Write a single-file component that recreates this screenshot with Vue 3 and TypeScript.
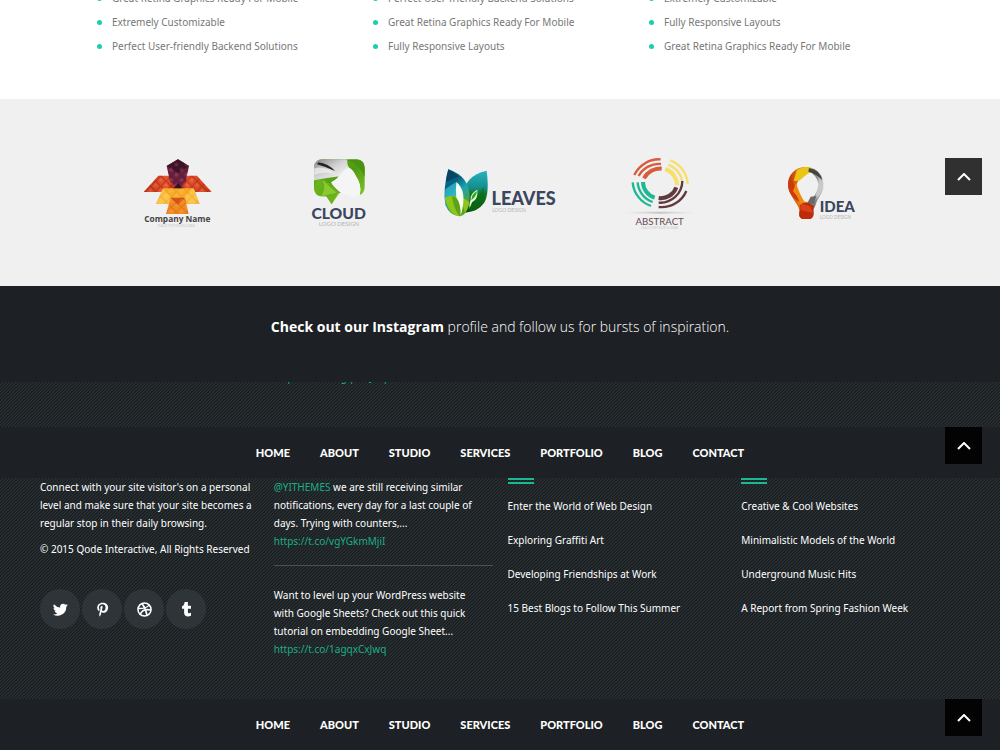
<script setup lang="ts">
interface Feature { id: string; items: string[] }
interface FooterLinks { id: string; links: string[] }

const features: Feature[] = [
  { id: 'a', items: ['Great Retina Graphics Ready For Mobile', 'Extremely Customizable', 'Perfect User-friendly Backend Solutions'] },
  { id: 'b', items: ['Perfect User-friendly Backend Solutions', 'Great Retina Graphics Ready For Mobile', 'Fully Responsive Layouts'] },
  { id: 'c', items: ['Extremely Customizable', 'Fully Responsive Layouts', 'Great Retina Graphics Ready For Mobile'] },
]

const menu: string[] = ['HOME', 'ABOUT', 'STUDIO', 'SERVICES', 'PORTFOLIO', 'BLOG', 'CONTACT']

const posts: FooterLinks[] = [
  { id: 'recent', links: ['Enter the World of Web Design', 'Exploring Graffiti Art', 'Developing Friendships at Work', '15 Best Blogs to Follow This Summer'] },
  { id: 'popular', links: ['Creative & Cool Websites', 'Minimalistic Models of the World', 'Underground Music Hits', 'A Report from Spring Fashion Week'] },
]
</script>

<template>
  <div class="page">
    <section class="features">
      <ul v-for="col in features" :key="col.id" class="feature-list">
        <li v-for="item in col.items" :key="item">{{ item }}</li>
      </ul>
    </section>

    <section class="clients">
      <div class="client-grid">
        <svg class="client" viewBox="-37 -22 360 300" role="img" aria-label="Company Name">
          <defs>
            <pattern id="weave" width="22" height="22" patternUnits="userSpaceOnUse" patternTransform="rotate(45 143 70)">
              <path d="M0 0H22M0 0V22" stroke="#5a1010" stroke-opacity=".35" stroke-width="5" />
              <rect x="5" y="5" width="10" height="10" fill="#fff" fill-opacity=".12" />
            </pattern>
            <linearGradient id="wing" x1="0" x2="1">
              <stop offset="0" stop-color="#c93a1c" /><stop offset=".35" stop-color="#e8502a" />
              <stop offset=".5" stop-color="#a02018" /><stop offset=".65" stop-color="#e8502a" /><stop offset="1" stop-color="#cf3a18" />
            </linearGradient>
          </defs>
          <path d="M84 76H200L244 125H40Z" fill="url(#wing)" />
          <path d="M84 76H200L244 125H40Z" fill="url(#weave)" />
          <path d="M98 114H190L208 161H77Z" fill="#fbb02c" />
          <path d="M98 114L143 161H77ZM190 114L208 161H143Z" fill="#ffcc50" fill-opacity=".7" />
          <path d="M98 114H190L208 161H77Z" fill="url(#weave)" opacity=".35" />
          <path d="M143 27L176 47L166 93L143 114L119 93L109 47Z" fill="#6b1f40" />
          <path d="M143 27L176 47L143 68L109 47Z" fill="#3d1228" />
          <path d="M143 27L176 47L166 93L143 114L119 93L109 47Z" fill="url(#weave)" />
          <path d="M143 99L156 114H130Z" fill="#341020" />
          <path d="M121 142H164L175 191H107Z" fill="#f28a20" />
          <path d="M121 142H164L143 163Z" fill="#d9581c" />
          <path d="M121 142H164L175 191H107Z" fill="url(#weave)" opacity=".5" />
          <text x="141" y="214" class="company">Company Name</text>
          <text x="138" y="229" class="slogan">PLACE FOR YOUR SLOGAN</text>
        </svg>

        <svg class="client" viewBox="-64 -22 360 300" role="img" aria-label="Cloud logo design">
          <defs>
            <linearGradient id="cloud-grey" x1="0" y1="0" x2="1" y2="1">
              <stop offset="0" stop-color="#858585" /><stop offset=".45" stop-color="#d2d2d2" /><stop offset="1" stop-color="#ffffff" />
            </linearGradient>
            <linearGradient id="cloud-green" x1="0" y1="0" x2="1" y2="1">
              <stop offset="0" stop-color="#73bd24" /><stop offset=".5" stop-color="#4e9a12" /><stop offset="1" stop-color="#8bd02b" />
            </linearGradient>
          </defs>
          <path d="M64 27H170Q192 29 193 52V110Q192 130 178 134Q186 104 166 76Q158 58 146 52Q120 58 112 82Q110 112 128 128H114L94 162L78 138H62Q42 134 41 112V50Q42 30 64 27Z" fill="url(#cloud-green)" />
          <path d="M146 52Q158 58 166 76Q186 104 178 134L160 140L122 128Q98 110 92 96Q116 84 122 66Q130 54 146 52Z" fill="#f5f5f5" />
          <path d="M64 27H142Q138 43 147 52Q126 58 118 78Q80 82 41 90V50Q42 30 64 27Z" fill="url(#cloud-grey)" />
          <path d="M54 36Q84 40 104 62Q78 50 50 42Z" fill="#252525" />
          <path d="M42 54Q76 45 108 72Q70 60 42 74Z" fill="#f2f2f2" opacity=".7" />
          <path d="M136 28H170Q192 29 193 52V80Q180 42 136 28Z" fill="#4b9213" />
          <path d="M50 88Q90 88 118 128L94 162L78 138H62Q42 134 41 112Z" fill="#73b91f" opacity=".65" />
          <path d="M66 88L108 127L62 138Q80 112 66 88Z" fill="#a0dc42" opacity=".6" />
          <text x="115" y="206" class="brand" font-size="47">CLOUD</text>
          <text x="116" y="227" class="tag" font-size="18">LOGO DESIGN</text>
        </svg>

        <svg class="client" viewBox="15 -52 360 300" role="img" aria-label="Leaves logo design">
          <defs>
            <linearGradient id="leaf-left" x1="0" y1="0" x2=".4" y2="1">
              <stop offset="0" stop-color="#087d9a" /><stop offset=".35" stop-color="#056181" /><stop offset=".6" stop-color="#20a3b3" /><stop offset="1" stop-color="#5aa51c" />
            </linearGradient>
            <linearGradient id="leaf-right" x1="0" y1="0" x2="0" y2="1">
              <stop offset="0" stop-color="#24b2c4" /><stop offset=".4" stop-color="#168f8b" /><stop offset=".55" stop-color="#12752a" /><stop offset="1" stop-color="#084f10" />
            </linearGradient>
          </defs>
          <path d="M155 31Q164 101 147 128Q130 153 91 157L81 112Q88 45 155 31Z" fill="url(#leaf-right)" />
          <path d="M40 27Q105 49 104 113Q105 155 74 168Q44 166 31 134Q23 88 40 27Z" fill="url(#leaf-left)" />
          <path d="M40 27Q58 34 71 48L33 66Q34 46 40 27Z" fill="#064664" />
          <path d="M31 86L62 66L67 114L30 120Z" fill="#35bfd0" opacity=".7" />
          <path d="M29 112Q70 95 103 126Q98 158 74 168Q41 162 29 112Z" fill="#8fc51b" />
          <path d="M51 108Q82 111 90 160Q82 166 74 168Q56 146 51 108Z" fill="#388d16" opacity=".6" />
          <path d="M64 65Q99 92 77 166Q78 129 64 112Q61 92 64 65Z" fill="#f7fff1" />
          <path d="M127 88Q130 116 111 126L103 147Q102 130 107 118Q106 98 127 88Z" fill="#edffda" />
          <path d="M126 92Q124 110 109 120Q109 101 126 92Z" fill="#31a71f" />
          <path d="M100 144Q128 119 145 79Q157 132 113 153Z" fill="#0b6c0e" opacity=".55" />
          <text x="266" y="134" class="brand" font-size="54">LEAVES</text>
          <text x="222" y="155" class="tag" font-size="15">LOGO DESIGN</text>
        </svg>

        <svg class="client" viewBox="-56 -22 360 300" role="img" aria-label="Abstract">
          <defs>
            <linearGradient id="shade" x1="0" x2="1">
              <stop offset="0" stop-color="#aaa" stop-opacity="0" /><stop offset=".5" stop-color="#999" /><stop offset="1" stop-color="#aaa" stop-opacity="0" />
            </linearGradient>
          </defs>
          <g fill="none">
            <g stroke="#d95b3e">
              <path d="M73 84A55 55 0 0 1 126 55" stroke-width="12" />
              <path d="M57 77A69 69 0 0 1 124 41" stroke-width="7" />
              <path d="M44 74A82 82 0 0 1 123 27" stroke-width="7" />
            </g>
            <g stroke="#f7df6b">
              <path d="M137 56A52 52 0 0 1 172 105" stroke-width="12" />
              <path d="M146 43A67 67 0 0 1 188 95" stroke-width="7" />
              <path d="M152 30A80 80 0 0 1 204 101" stroke-width="7" />
            </g>
            <g stroke="#20b893">
              <path d="M70 95A50 50 0 0 0 105 142" stroke-width="12" />
              <path d="M54 96A67 67 0 0 0 99 155" stroke-width="7" />
              <path d="M39 96A82 82 0 0 0 94 167" stroke-width="7" />
            </g>
            <g stroke="#613a40">
              <path d="M117 143A49 49 0 0 0 170 111" stroke-width="12" />
              <path d="M117 157A66 66 0 0 0 188 92" stroke-width="7" />
              <path d="M117 170A80 80 0 0 0 200 122" stroke-width="7" />
            </g>
          </g>
          <ellipse cx="120" cy="187" rx="110" ry="3" fill="url(#shade)" opacity=".5" />
          <text x="120" y="224" class="abstract">ABSTRACT</text>
          <text x="120" y="235" class="slogan">PLACE FOR YOUR SLOGAN</text>
        </svg>

        <svg class="client" viewBox="-53 -37 360 300" role="img" aria-label="Idea logo design">
          <defs>
            <linearGradient id="bulb" x1="0" y1="0" x2="1" y2="0">
              <stop offset="0" stop-color="#b62b05" /><stop offset=".28" stop-color="#e17311" /><stop offset=".62" stop-color="#d8c112" />
              <stop offset=".72" stop-color="#707070" /><stop offset="1" stop-color="#d9d9d9" />
            </linearGradient>
          </defs>
          <path fill-rule="evenodd" d="M78 35C110 35 132 59 132 88C132 113 115 124 107 151L101 163Q105 185 92 191H67Q54 183 60 166C54 141 25 119 25 87C25 57 48 35 78 35ZM86 48Q51 68 49 99Q60 119 73 139H90Q108 121 119 92Q109 54 86 48Z" fill="url(#bulb)" />
          <path d="M52 44Q82 25 109 47L86 54Q70 66 59 76L42 77Z" fill="#ebc514" />
          <path d="M88 38Q121 44 128 74Q109 55 86 49Z" fill="#444" />
          <path d="M118 67Q139 99 111 129L97 142Q116 111 118 67Z" fill="#c9c9c9" />
          <path d="M30 69Q42 82 60 124L66 143Q25 123 25 87Z" fill="#cf3a0d" />
          <path d="M49 82Q59 117 77 143L62 154Q61 130 40 108Z" fill="#ef8b12" />
          <path d="M93 124L111 122L101 146L82 145Z" fill="#696969" />
          <path d="M60 150Q77 132 102 151L101 163Q105 185 92 191H67Q54 183 60 166Z" fill="#bd2b0d" />
          <path d="M63 144L91 153L101 173L62 164Z" fill="#e64a18" opacity=".7" />
          <text x="173" y="171" class="brand" font-size="45">IDEA</text>
          <text x="167" y="190" class="tag" font-size="14">LOGO DESIGN</text>
        </svg>
      </div>
      <button class="to-top raised" type="button" aria-label="Back to top">
        <svg viewBox="0 0 14 8" aria-hidden="true"><path d="M1 7L7 1L13 7" /></svg>
      </button>
    </section>

    <section class="instagram">
      <p><strong>Check out our Instagram</strong> profile and follow us for bursts of inspiration.</p>
    </section>

    <div class="strip hatched">
      <a class="accent" href="#tweet">https://t.co/1agqxCxJwq</a>
    </div>

    <nav class="bar" aria-label="Main">
      <a v-for="item in menu" :key="item" :href="'#' + item.toLowerCase()">{{ item }}</a>
      <button class="to-top" type="button" aria-label="Back to top">
        <svg viewBox="0 0 14 8" aria-hidden="true"><path d="M1 7L7 1L13 7" /></svg>
      </button>
    </nav>

    <footer class="footer hatched">
      <div class="about">
        <p>Connect with your site visitor's on a personal level and make sure that your site becomes a regular stop in their daily browsing.</p>
        <p>© 2015 Qode Interactive, All Rights Reserved</p>
        <div class="social">
          <a href="#twitter" aria-label="Twitter">
            <svg viewBox="0 0 24 24"><path d="M23.600 4.900a9.700 9.700 0 0 1-2.800.8 4.800 4.800 0 0 0 2.100-2.700 9.700 9.700 0 0 1-3.100 1.200 4.900 4.900 0 0 0-8.300 4.400A13.800 13.800 0 0 1 1.500 3.500a4.900 4.900 0 0 0 1.500 6.500 4.800 4.800 0 0 1-2.200-.6 4.900 4.900 0 0 0 3.900 4.900 4.900 4.900 0 0 1-2.200.1 4.900 4.900 0 0 0 4.500 3.400A9.800 9.800 0 0 1 0 19.800 13.800 13.800 0 0 0 21.200 7.500a9.900 9.900 0 0 0 2.400-2.600z" /></svg>
          </a>
          <a href="#pinterest" aria-label="Pinterest">
            <svg viewBox="0 0 24 24"><path d="M12.500 1C6.600 1 3.500 4.900 3.500 9c0 2 1.100 4.400 2.800 5.200.4.200.5 0 .6-.3l.5-1.700c0-.2 0-.4-.2-.6-.6-.7-1-1.700-1-2.700 0-2.700 2-5.300 5.600-5.300 3 0 5.100 2 5.100 5 0 3.300-1.700 5.600-3.900 5.600-1.200 0-2.100-1-1.800-2.200.3-1.500 1-3 1-4.100 0-2.500-3.700-2.200-3.700 1.200 0 1 .4 1.700.4 1.700l-1.900 7.500c-.4 1.800 0 4.700.1 4.900 0 .1.200.2.300.1.100-.2 1.700-2.300 2.200-4.200l.9-3.500c.5.900 1.800 1.600 3.200 1.600 4.200 0 7.300-3.900 7.300-8.600C21 4 17.300 1 12.500 1z" /></svg>
          </a>
          <a href="#dribbble" aria-label="Dribbble">
            <svg viewBox="0 0 24 24"><g fill="none" stroke="#fff" stroke-width="2.400"><circle cx="12" cy="12" r="10.500" /><path d="M8 2.500C12 7.500 14.500 13 16 21.500M1.500 10.500C10 10.700 16 9 19.500 5M5 20C8 13 14.500 11 22.500 13" /></g></svg>
          </a>
          <a href="#tumblr" aria-label="Tumblr">
            <svg viewBox="0 0 24 24"><path d="M9 0h5.200v6h5v4.700h-5v5.100c0 2.200 1.800 2.700 5 1.400v4.700c-5.200 2.400-11 1.300-11-4.700v-6.500H4.800V6.700C7.500 6 8.700 3.500 9 0z" /></svg>
          </a>
        </div>
      </div>

      <div class="tweets">
        <p><a class="accent" href="#yithemes">@YITHEMES</a> we are still receiving similar notifications, every day for a last couple of days. Trying with counters,... <a class="accent line" href="#tweet-1">https://t.co/vgYGkmMjiI</a></p>
        <p>Want to level up your WordPress website with Google Sheets? Check out this quick tutorial on embedding Google Sheet... <a class="accent line" href="#tweet-2">https://t.co/1agqxCxJwq</a></p>
      </div>

      <div v-for="group in posts" :key="group.id" class="posts">
        <div class="rule"></div>
        <a v-for="link in group.links" :key="link" href="#post">{{ link }}</a>
      </div>
    </footer>

    <nav class="bar" aria-label="Footer">
      <a v-for="item in menu" :key="item" :href="'#' + item.toLowerCase()">{{ item }}</a>
      <button class="to-top" type="button" aria-label="Back to top">
        <svg viewBox="0 0 14 8" aria-hidden="true"><path d="M1 7L7 1L13 7" /></svg>
      </button>
    </nav>
  </div>
</template>

<style>
body { margin: 0; background: #1d2024; }
</style>

<style scoped>
.page { font-family: "Noto Sans", "Open Sans", sans-serif; font-size: 10px; line-height: 18px; color: #fff; overflow: hidden; }
a { color: inherit; text-decoration: none; }
p { margin: 0; }

.features { display: grid; grid-template-columns: repeat(3, 1fr); padding: 0 7.6% 41px 9.6%; background: #fff; color: #777; overflow: hidden; }
.feature-list { list-style: none; margin: -14px 0 0; padding: 0; line-height: 24px; }
.feature-list li { display: flex; align-items: center; gap: 10px; }
.feature-list li::before { content: ""; width: 5px; height: 5px; margin-left: 1px; border-radius: 50%; background: #1bcfae; }

.clients { position: relative; background: #f0f0f0; padding: 44px 9.7% 43px; }
.client-grid { display: grid; grid-template-columns: repeat(5, 1fr); justify-items: center; }
.client { display: block; width: 120px; height: 100px; }
.client text { text-anchor: middle; }
.company { font: bold 25px "Open Sans", sans-serif; fill: #444; }
.slogan { font: 9px "Open Sans", sans-serif; fill: #c4c4c4; }
.brand { font-family: Lato, sans-serif; font-weight: 900; fill: #3a465e; }
.tag { font-family: Lato, sans-serif; fill: #b3b3b3; }
.abstract { font: 29px Lato, sans-serif; fill: #654a50; }

.to-top { position: absolute; right: 18px; top: 0; display: flex; align-items: center; justify-content: center; width: 37px; height: 37px; padding: 0; border: 0; background: #030303; }
.to-top.raised { top: 59px; background: #303030; }
.to-top svg { width: 14px; height: 8px; fill: none; stroke: #fff; stroke-width: 2; }

.instagram { padding: 29px 20px 43px; background: #1d2024; text-align: center; font-family: "Open Sans", sans-serif; font-size: 14px; line-height: 24px; font-weight: 300; }
.instagram strong { font-weight: 700; }

.hatched { background: #1b2023 url("data:image/svg+xml,%3Csvg xmlns='http://www.w3.org/2000/svg' width='10' height='10'%3E%3Cpath stroke='%232f3539' stroke-width='1' d='M-1 1L1-1M-1 4.333L4.333-1M-1 7.667L7.667-1M-1 11L11-1M2.333 11L11 2.333M5.667 11L11 5.667M9 11L11 9'/%3E%3C/svg%3E"); }
.accent { color: #1bae87; }
.strip { height: 45px; padding-left: 274px; overflow: hidden; }
.strip a { display: block; margin-top: -14px; }

.bar { position: relative; display: flex; justify-content: center; gap: 30px; padding: 17px 0 16px; background: #1d2024; font-family: Lato, sans-serif; font-weight: 900; font-size: 11px; line-height: 18px; }

.footer { display: grid; grid-template-columns: repeat(4, 1fr); gap: 15px; padding: 0 40px 41px; }
.about p + p { margin-top: 8px; }
.social { display: flex; gap: 2px; margin-top: 31px; }
.social a { display: flex; align-items: center; justify-content: center; width: 40px; height: 40px; border-radius: 50%; background: rgba(56, 60, 65, .65); }
.social svg { width: 15px; height: 15px; fill: #fff; }
.tweets p { padding: 0 12px 15px 0; }
.tweets p + p { padding: 20px 12px 0 0; border-top: 1px solid #4d5153; }
.line { display: block; }
.rule { width: 26px; height: 2px; margin-bottom: 13px; border-top: 2px solid #1bb894; border-bottom: 2px solid #1bb894; }
.posts a { display: block; margin-bottom: 16px; }
</style>
